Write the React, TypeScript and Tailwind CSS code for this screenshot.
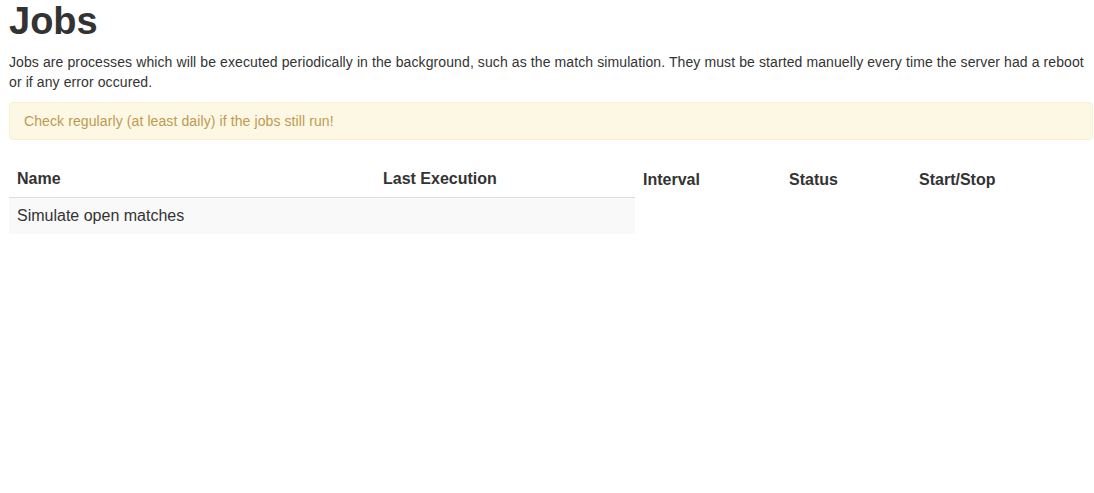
export default function App() {
  return (
    <div className="pl-[9px] pr-[1px] font-['Liberation_Sans',Arial,sans-serif] text-[#333] text-[14px] leading-[20px] tracking-[0.1px] bg-white min-h-screen">
      <h1 className="text-[38px] font-bold leading-[42px] m-0 tracking-normal">Jobs</h1>
      <p className="mt-[10px] mb-[10px]">
        Jobs are processes which will be executed periodically in the background, such as the match simulation. They must be started manuelly every time the server had a reboot or if any error occured.
      </p>
      <div className="border border-[#fbeed5] bg-[#fcf8e3] text-[#c09853] rounded-[4px] py-[8px] px-[14px]">
        Check regularly (at least daily) if the jobs still run!
      </div>
      <div className="flex mt-[21px] text-[16px] leading-[20px] tracking-normal">
        <table className="w-[626px] border-collapse">
          <thead>
            <tr>
              <th className="w-[366px] text-left font-bold p-[8px]">Name</th>
              <th className="text-left font-bold p-[8px]">Last Execution</th>
            </tr>
          </thead>
          <tbody>
            <tr className="bg-[#f9f9f9]">
              <td className="p-[8px] border-t border-[#ddd]">Simulate open matches</td>
              <td className="p-[8px] border-t border-[#ddd]"></td>
            </tr>
          </tbody>
        </table>
        <div className="flex font-bold pt-[9px]">
          <div className="w-[146px] px-[8px]">Interval</div>
          <div className="w-[130px] px-[8px]">Status</div>
          <div className="px-[8px]">Start/Stop</div>
        </div>
      </div>
    </div>
  );
}
